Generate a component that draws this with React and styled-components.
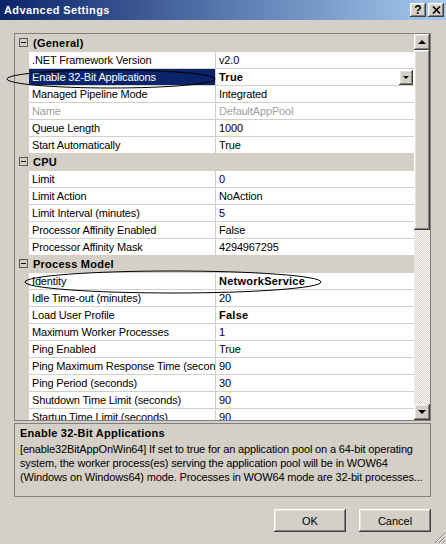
import React from 'react';
import styled, { createGlobalStyle } from 'styled-components';

const GlobalStyle = createGlobalStyle`
  html, body {
    margin: 0;
    padding: 0;
    background: #d4d0c8;
  }
  * { box-sizing: border-box; }
  body {
    font-family: "Liberation Sans", Arial, sans-serif;
    font-size: 11px;
  }
`;

// classic win2k 3d bevel
const raised = `
  background: #d4d0c8;
  box-shadow: inset -1px -1px #404040, inset 1px 1px #ffffff, inset -2px -2px #808080, inset 2px 2px #e4e2dc;
`;

const sections = [
  {
    title: '(General)',
    rows: [
      { label: '.NET Framework Version', value: 'v2.0' },
      { label: 'Enable 32-Bit Applications', value: 'True', bold: true, selected: true },
      { label: 'Managed Pipeline Mode', value: 'Integrated' },
      { label: 'Name', value: 'DefaultAppPool', disabled: true },
      { label: 'Queue Length', value: '1000' },
      { label: 'Start Automatically', value: 'True' },
    ],
  },
  {
    title: 'CPU',
    rows: [
      { label: 'Limit', value: '0' },
      { label: 'Limit Action', value: 'NoAction' },
      { label: 'Limit Interval (minutes)', value: '5' },
      { label: 'Processor Affinity Enabled', value: 'False' },
      { label: 'Processor Affinity Mask', value: '4294967295' },
    ],
  },
  {
    title: 'Process Model',
    rows: [
      { label: 'Identity', value: 'NetworkService', bold: true },
      { label: 'Idle Time-out (minutes)', value: '20' },
      { label: 'Load User Profile', value: 'False', bold: true },
      { label: 'Maximum Worker Processes', value: '1' },
      { label: 'Ping Enabled', value: 'True' },
      { label: 'Ping Maximum Response Time (seconds)', value: '90' },
      { label: 'Ping Period (seconds)', value: '30' },
      { label: 'Shutdown Time Limit (seconds)', value: '90' },
      { label: 'Startup Time Limit (seconds)', value: '90' },
    ],
  },
];

const descLines = [
  '[enable32BitAppOnWin64] If set to true for an application pool on a 64-bit operating',
  'system, the worker process(es) serving the application pool will be in WOW64',
  '(Windows on Windows64) mode. Processes in WOW64 mode are 32-bit processes...',
];

export default function App() {
  return (
    <>
      <GlobalStyle />
      <Window>
        <TitleBar>
          <Title>Advanced Settings</Title>
          <CaptionButtons>
            <CaptionButton>?</CaptionButton>
            <CaptionButton>
              <svg width="9" height="8" viewBox="0 0 9 8">
                <path d="M1 0.5 L8 7.5 M8 0.5 L1 7.5" stroke="#000" strokeWidth="1.6" />
              </svg>
            </CaptionButton>
          </CaptionButtons>
        </TitleBar>

        <Body>
          <GridFrame>
            <GridBody>
              {sections.map(sec => (
                <React.Fragment key={sec.title}>
                  <CategoryRow>
                    <Toggle><MinusBox /></Toggle>
                    <CategoryTitle>{sec.title}</CategoryTitle>
                  </CategoryRow>
                  {sec.rows.map(r => (
                    <Row key={r.label}>
                      <Gutter />
                      <LabelCell selected={r.selected} disabled={r.disabled}>{r.label}</LabelCell>
                      <ValueCell bold={r.bold} disabled={r.disabled}>
                        <span>{r.value}</span>
                        {r.selected && <DropButton><Arrow down small /></DropButton>}
                      </ValueCell>
                    </Row>
                  ))}
                </React.Fragment>
              ))}
            </GridBody>
            <ScrollBar>
              <ScrollButton><Arrow /></ScrollButton>
              <Thumb />
              <Track />
              <ScrollButton><Arrow down /></ScrollButton>
            </ScrollBar>
          </GridFrame>

          <DescPanel>
            <DescTitle>Enable 32-Bit Applications</DescTitle>
            {descLines.map(l => <DescLine key={l}>{l}</DescLine>)}
          </DescPanel>

          <ButtonRow>
            <DialogButton>OK</DialogButton>
            <DialogButton>Cancel</DialogButton>
          </ButtonRow>
        </Body>

        <Grip>
          <svg width="13" height="13" viewBox="0 0 13 13">
            <path d="M12 2 L2 12 M12 6 L6 12 M12 10 L10 12" stroke="#808080" strokeWidth="1" />
            <path d="M12 3 L3 12 M12 7 L7 12 M12 11 L11 12" stroke="#ffffff" strokeWidth="1" />
          </svg>
        </Grip>

        <Annotations width="446" height="544" viewBox="0 0 446 544">
          <ellipse cx="111" cy="79" rx="104" ry="9" fill="none" stroke="#000" strokeWidth="1" />
          <ellipse cx="173" cy="282" rx="148" ry="11" fill="none" stroke="#000" strokeWidth="1" />
        </Annotations>
      </Window>
    </>
  );
}

const Window = styled.div`
  position: relative;
  width: 446px;
  height: 544px;
  background: #d4d0c8;
  display: flex;
  flex-direction: column;
  overflow: hidden;
  color: #000;
`;

const TitleBar = styled.div`
  height: 20px;
  display: flex;
  align-items: center;
  padding: 0 2px 0 4px;
  background: linear-gradient(to right, #0a246a, #a6caf0);
`;

const Title = styled.div`
  flex: 1;
  color: #fff;
  font-weight: bold;
  font-size: 11px;
  letter-spacing: 0.4px;
`;

const CaptionButtons = styled.div`
  display: flex;
  gap: 2px;
`;

const CaptionButton = styled.div`
  ${raised}
  width: 16px;
  height: 14px;
  display: flex;
  align-items: center;
  justify-content: center;
  font-weight: bold;
  font-size: 12px;
  line-height: 1;
`;

const Body = styled.div`
  flex: 1;
  display: flex;
  flex-direction: column;
  padding: 13px 15px 0 14px;
`;

const GridFrame = styled.div`
  height: 388px;
  display: flex;
  border: 1px solid #808080;
  background: #fff;
`;

const GridBody = styled.div`
  flex: 1;
  overflow: hidden;
  display: flex;
  flex-direction: column;
`;

const CategoryRow = styled.div`
  flex: none;
  height: 17px;
  display: flex;
  align-items: center;
  background: #d4d0c8;
`;

const Toggle = styled.div`
  width: 14px;
  height: 17px;
  display: flex;
  align-items: center;
  justify-content: center;
  padding-left: 2px;
`;

const MinusBox = styled.div`
  position: relative;
  width: 9px;
  height: 9px;
  border: 1px solid #5a5a5a;
  &::after {
    content: '';
    position: absolute;
    left: 1px;
    right: 1px;
    top: 3px;
    height: 1px;
    background: #000;
  }
`;

const CategoryTitle = styled.div`
  padding-left: 4px;
  font-weight: bold;
  letter-spacing: 0.25px;
`;

const Row = styled.div`
  flex: none;
  height: 17px;
  display: flex;
`;

const Gutter = styled.div`
  width: 14px;
  background: #d4d0c8;
`;

const LabelCell = styled.div`
  width: 186px;
  border-top: 1px solid #d4d0c8;
  padding-left: 3px;
  line-height: 16px;
  white-space: nowrap;
  overflow: hidden;
  letter-spacing: -0.15px;
  background: ${p => (p.selected ? '#0a246a' : '#fff')};
  color: ${p => (p.selected ? '#fff' : p.disabled ? '#a0a0a0' : '#000')};
`;

const ValueCell = styled.div`
  flex: 1;
  display: flex;
  align-items: center;
  border-top: 1px solid #d4d0c8;
  border-left: 1px solid #d4d0c8;
  padding-left: 3px;
  white-space: nowrap;
  font-weight: ${p => (p.bold ? 'bold' : 'normal')};
  letter-spacing: ${p => (p.bold ? '0.25px' : '-0.15px')};
  color: ${p => (p.disabled ? '#a0a0a0' : '#000')};
`;

const DropButton = styled.div`
  ${raised}
  margin-left: auto;
  margin-right: 1px;
  width: 14px;
  height: 15px;
  display: flex;
  align-items: center;
  justify-content: center;
`;

const Arrow = styled.div`
  width: 0;
  height: 0;
  border-left: ${p => (p.small ? 3 : 4)}px solid transparent;
  border-right: ${p => (p.small ? 3 : 4)}px solid transparent;
  ${p => (p.down ? 'border-top' : 'border-bottom')}: ${p => (p.small ? 3 : 4)}px solid #000;
`;

const ScrollBar = styled.div`
  width: 16px;
  display: flex;
  flex-direction: column;
  background: repeating-conic-gradient(#d4d0c8 0 25%, #ffffff 0 50%) 0 0 / 2px 2px;
`;

const ScrollButton = styled.div`
  ${raised}
  flex: none;
  height: 16px;
  display: flex;
  align-items: center;
  justify-content: center;
`;

const Thumb = styled.div`
  ${raised}
  flex: none;
  height: 180px;
`;

const Track = styled.div`
  flex: 1;
`;

const DescPanel = styled.div`
  margin-top: 2px;
  height: 74px;
  border: 1px solid #808080;
  padding: 2px 5px 0 5px;
`;

const DescTitle = styled.div`
  font-weight: bold;
  line-height: 15px;
  margin-bottom: 1px;
  letter-spacing: 0.25px;
`;

const DescLine = styled.div`
  line-height: 14px;
  white-space: nowrap;
  letter-spacing: -0.15px;
`;

const ButtonRow = styled.div`
  display: flex;
  justify-content: flex-end;
  gap: 13px;
  margin-top: 12px;
`;

const DialogButton = styled.button`
  ${raised}
  width: 72px;
  height: 23px;
  border: none;
  padding: 0;
  font-family: inherit;
  font-size: 11px;
  color: #000;
`;

const Grip = styled.div`
  position: absolute;
  right: 0;
  bottom: 0;
  width: 13px;
  height: 13px;
`;

const Annotations = styled.svg`
  position: absolute;
  left: 0;
  top: 0;
  pointer-events: none;
`;
